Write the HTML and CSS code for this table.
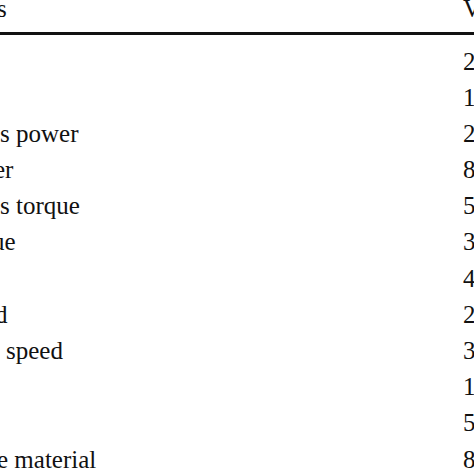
FILE: index.html
```html
<!DOCTYPE html>
<html lang="en">
<head>
<meta charset="utf-8">
<title>Table</title>
<link rel="stylesheet" href="styles.css">
</head>
<body>
<div class="sheet">
  <div class="row head"><span class="label in-s">s</span><span class="val">V</span></div>
  <div class="rows">
    <div class="row"><span class="label"></span><span class="val">2</span></div>
    <div class="row"><span class="label"></span><span class="val">1</span></div>
    <div class="row"><span class="label in-0">s power</span><span class="val">2</span></div>
    <div class="row"><span class="label in-er">er</span><span class="val">8</span></div>
    <div class="row"><span class="label in-0">s torque</span><span class="val">5</span></div>
    <div class="row"><span class="label in-ue">ue</span><span class="val">3</span></div>
    <div class="row"><span class="label"></span><span class="val">4</span></div>
    <div class="row"><span class="label in-d">d</span><span class="val">2</span></div>
    <div class="row"><span class="label in-sp">speed</span><span class="val">3</span></div>
    <div class="row"><span class="label"></span><span class="val">1</span></div>
    <div class="row"><span class="label"></span><span class="val">5</span></div>
    <div class="row"><span class="label in-e">e material</span><span class="val">8</span></div>
  </div>
</div>
</body>
</html>
```
FILE: styles.css
```css
html, body {
  margin: 0;
  padding: 0;
  background: #fff;
  overflow: hidden;
}
.sheet {
  width: 474px;
  height: 474px;
  overflow: hidden;
  font-family: "Liberation Serif", "Times New Roman", serif;
  font-size: 25px;
  color: #111;
}
.row {
  display: grid;
  grid-template-columns: 463px 1fr;
  height: 36.2px;
  line-height: 36.2px;
  white-space: nowrap;
}
.head {
  height: 18px;
  line-height: 18px;
  padding-bottom: 14px;
  border-bottom: 3px solid #111;
}
.rows {
  padding-top: 8.5px;
}
.label {
  display: block;
}
.val {
  display: block;
}
.in-s { text-indent: -3px; }
.in-0 { text-indent: 0; }
.in-er { text-indent: -6px; }
.in-ue { text-indent: -8px; }
.in-d { text-indent: -5px; }
.in-sp { text-indent: 6px; }
.in-e { text-indent: -3px; }
```
